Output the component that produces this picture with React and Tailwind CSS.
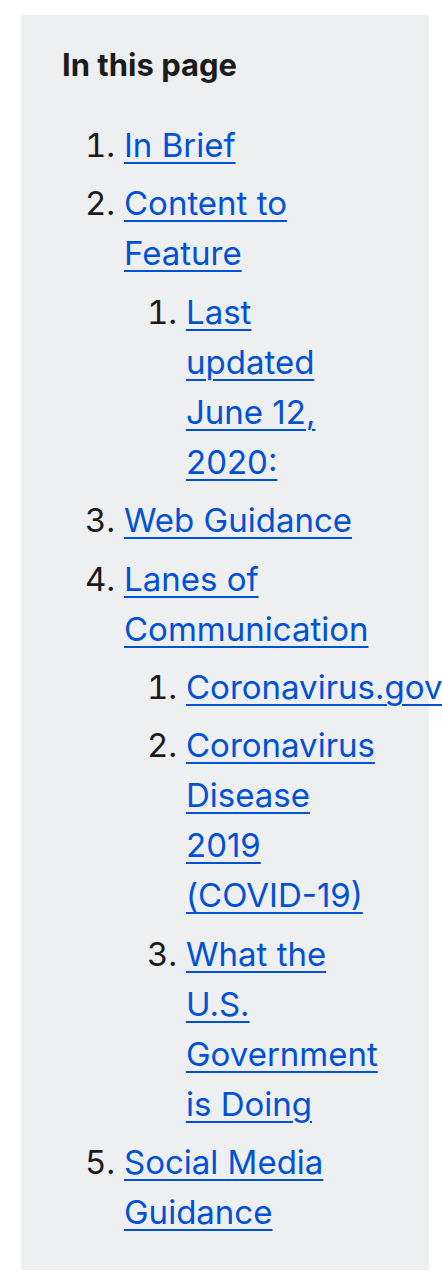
import React from 'react';

const items = [
    { label: 'In Brief' },
    { label: 'Content to Feature', children: ['Last updated June 12, 2020:'] },
    { label: 'Web Guidance' },
    {
        label: 'Lanes of Communication',
        children: ['Coronavirus.gov', 'Coronavirus Disease 2019 (COVID-19)', 'What the U.S. Government is Doing'],
    },
    { label: 'Social Media Guidance' },
];

const Link = ({ children }) => (
    <a href="#" className="text-[#0050d8] underline decoration-[2px] underline-offset-[5px]">
        {children}
    </a>
);

export default function App() {
    return (
        <div className="min-h-[1282px] bg-white pt-[15px] pl-[21px] text-[#1b1b1b]" style={{ fontFamily: 'Inter, "Liberation Sans", sans-serif' }}>
            <nav className="w-[408px] bg-[#edeff0] px-[41px] pt-[32px] pb-[33px]">
                <h2 className="text-[31px] font-bold leading-[36px]">In this page</h2>
                <ol className="mt-[37px] list-decimal pl-[62px] text-[33px] leading-[50px]">
                    {items.map((item, i) => (
                        <li key={i} className="mt-[8.4px] first:mt-0">
                            <Link>{item.label}</Link>
                            {item.children && (
                                <ol className="list-decimal pl-[62px]">
                                    {item.children.map((c, j) => (
                                        <li key={j} className="mt-[8.4px]">
                                            <Link>{c}</Link>
                                        </li>
                                    ))}
                                </ol>
                            )}
                        </li>
                    ))}
                </ol>
            </nav>
        </div>
    );
}
